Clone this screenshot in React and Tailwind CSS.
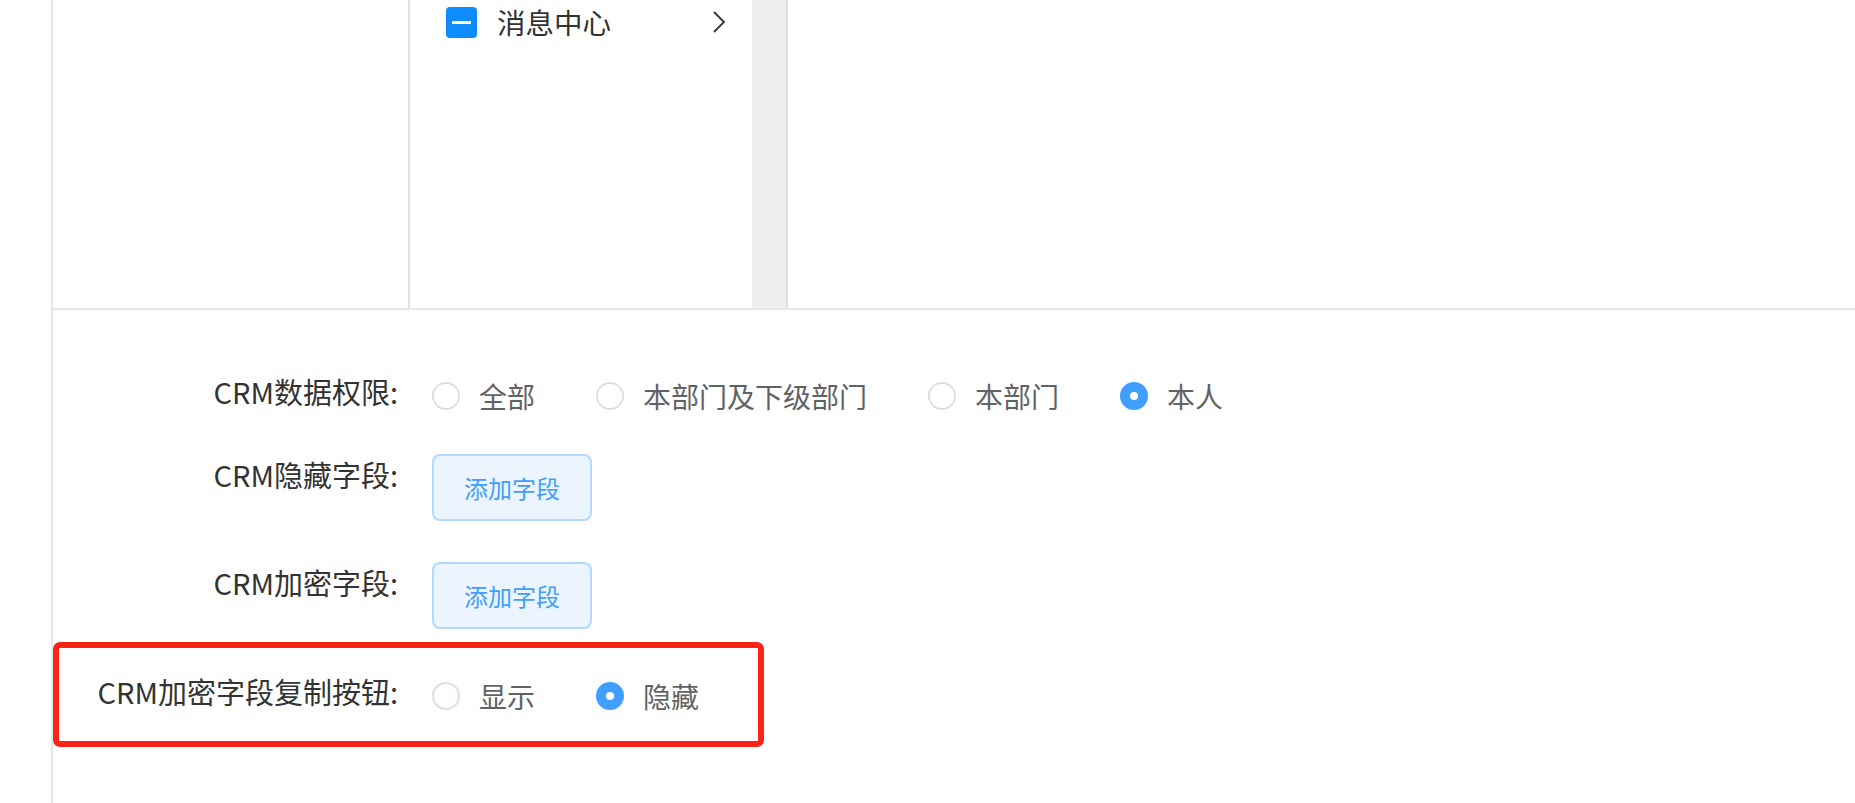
import React from "react";

const font = { fontFamily: '"Noto Sans CJK SC", "Noto Sans", sans-serif' };

function Radio({ label, checked }) {
    return (
        <label className="flex shrink-0 items-center mr-[61px] cursor-pointer whitespace-nowrap">
            <span
                className={
                    checked
                        ? "flex shrink-0 items-center justify-center w-[28px] h-[28px] rounded-full bg-[#409eff] border-2 border-[#409eff]"
                        : "flex shrink-0 items-center justify-center w-[28px] h-[28px] rounded-full bg-white border-2 border-[#dcdfe6]"
                }
            >
                {checked && <span className="w-[8px] h-[8px] rounded-full bg-white" />}
            </span>
            <span className="pl-[19px] text-[28px] leading-[40px] text-[#606266]">{label}</span>
        </label>
    );
}

function AddButton() {
    return (
        <button className="w-[160px] h-[67px] rounded-[8px] border-2 border-[#b3d8ff] bg-[#ecf5ff] text-[24px] text-[#409eff]">
            添加字段
        </button>
    );
}

export default function App() {
    return (
        <div className="w-full h-[803px] bg-white overflow-hidden flex" style={font}>
            <div className="ml-[51px] flex-1 border-l-2 border-[#e4e7ed] flex flex-col">
                {/* Top panel */}
                <div className="h-[310px] border-b-2 border-[#e4e7ed] flex">
                    <div className="w-[357px] border-r-2 border-[#dcdfe6]" />
                    <div className="w-[378px] flex border-r-2 border-[#dcdfe6]">
                        <div className="flex-1">
                            <div className="flex items-center h-[44px] pl-[36px] pr-[26px]">
                                <span className="flex items-center justify-center w-[31px] h-[31px] rounded-[4px] bg-[#0d8cff]">
                                    <span className="w-[19px] h-[3px] bg-white" />
                                </span>
                                <span className="ml-[20px] text-[28.5px] text-[#333333] flex-1">消息中心</span>
                                <svg width="14" height="22" viewBox="0 0 14 22" fill="none">
                                    <polyline points="2,1 12,11 2,21" stroke="#333333" strokeWidth="1.8" />
                                </svg>
                            </div>
                        </div>
                        <div className="w-[34px] bg-[#eeeeee]" />
                    </div>
                    <div className="flex-1" />
                </div>

                {/* Form */}
                <div className="pt-[61px] flex flex-col">
                    <div className="flex items-start h-[50px]">
                        <div className="w-[345px] shrink-0 text-right text-[29px] leading-[40px] text-[#333333]">CRM数据权限:</div>
                        <div className="ml-[34px] h-[50px] flex items-center">
                            <Radio label="全部" />
                            <Radio label="本部门及下级部门" />
                            <Radio label="本部门" />
                            <Radio label="本人" checked />
                        </div>
                    </div>
                    <div className="flex items-start mt-[33px]">
                        <div className="w-[345px] shrink-0 text-right text-[29px] leading-[40px] text-[#333333]">CRM隐藏字段:</div>
                        <div className="ml-[34px]">
                            <AddButton />
                        </div>
                    </div>
                    <div className="flex items-start mt-[41px]">
                        <div className="w-[345px] shrink-0 text-right text-[29px] leading-[40px] text-[#333333]">CRM加密字段:</div>
                        <div className="ml-[34px]">
                            <AddButton />
                        </div>
                    </div>
                    <div className="mt-[13px] w-[711px] h-[105px] border-[6px] border-[#fd2216] rounded-[7px] pt-[23px]">
                        <div className="flex items-start h-[50px]">
                            <div className="w-[339px] shrink-0 text-right text-[29px] leading-[40px] text-[#333333] whitespace-nowrap">CRM加密字段复制按钮:</div>
                            <div className="ml-[34px] h-[50px] flex items-center">
                                <Radio label="显示" />
                                <Radio label="隐藏" checked />
                            </div>
                        </div>
                    </div>
                </div>
            </div>
        </div>
    );
}
